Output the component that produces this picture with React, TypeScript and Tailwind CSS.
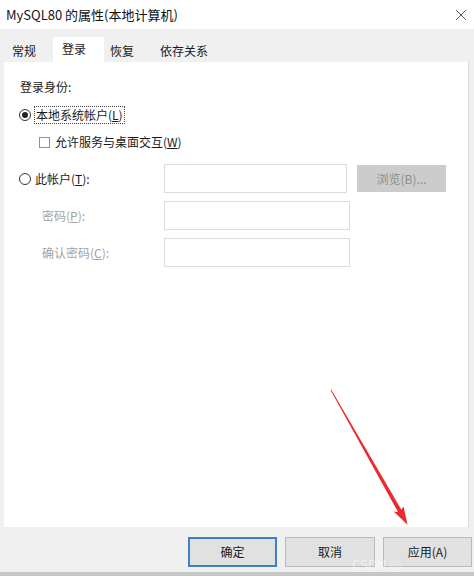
import React from "react";

const font = { fontFamily: '"Noto Sans CJK SC", "Noto Sans", sans-serif' };

function Radio({ checked }: { checked?: boolean }) {
  return (
    <span className="w-[12px] h-[12px] rounded-full border border-[#333] bg-white flex items-center justify-center shrink-0">
      {checked && <span className="w-[6px] h-[6px] rounded-full bg-[#222]" />}
    </span>
  );
}

function Field({ w }: { w: string }) {
  return <div className={`h-[29px] border border-[#dcdcdc] bg-white ${w}`} />;
}

export default function App() {
  return (
    <div style={font} className="w-[474px] h-[576px] bg-[#f0f0f0] flex flex-col text-[12px] text-[#1a1a1a] relative overflow-hidden">
      {/* 标题栏 */}
      <div className="h-[29px] bg-white flex items-center justify-between pl-[6px] pr-[7px]">
        <span className="text-[13px] text-[#111]">MySQL80 的属性(本地计算机)</span>
        <svg width="12" height="12" viewBox="0 0 12 12" className="text-[#555]">
          <path d="M1 1 L11 11 M11 1 L1 11" stroke="currentColor" strokeWidth="1" />
        </svg>
      </div>

      {/* 选项卡 */}
      <div className="flex items-end pl-[4px] pt-[8px] h-[33px]">
        <div className="w-[49px] h-[23px] flex items-center pl-[8px]">常规</div>
        <div className="w-[51px] h-[25px] bg-white flex items-center pl-[9px] pb-[2px]">登录</div>
        <div className="w-[48px] h-[23px] flex items-center pl-[6px]">恢复</div>
        <div className="w-[61px] h-[23px] flex items-center pl-[8px]">依存关系</div>
      </div>

      {/* 面板 */}
      <div className="ml-[4px] w-[465px] h-[465px] bg-white border-r border-[#dadada] relative">
        <div className="pl-[16px] pt-[16px]">登录身份:</div>

        <div className="flex items-center mt-[10px] pl-[15px] gap-[3px]">
          <Radio checked />
          <span className="border border-dotted border-[#444] px-[1px] leading-[16px]">
            本地系统帐户(<span className="underline">L</span>)
          </span>
        </div>

        <div className="flex items-center mt-[9px] pl-[35px] gap-[5px]">
          <span className="w-[11px] h-[11px] border border-[#6d9bd1] bg-white shrink-0" />
          <span>
            允许服务与桌面交互(<span className="underline">W</span>)
          </span>
        </div>

        <div className="flex items-center mt-[13px]">
          <div className="w-[160px] flex items-center pl-[15px] gap-[4px]">
            <Radio />
            <span>
              此帐户(<span className="underline">T</span>):
            </span>
          </div>
          <Field w="w-[183px]" />
          <div className="ml-[10px] w-[89px] h-[27px] bg-[#cccccc] text-[#8c8c8c] flex items-center justify-center">
            浏览(B)...
          </div>
        </div>

        <div className="flex items-center mt-[8px]">
          <div className="w-[160px] pl-[38px] text-[#a3a3a3]">
            密码(<span className="underline">P</span>):
          </div>
          <Field w="w-[186px]" />
        </div>

        <div className="flex items-center mt-[8px]">
          <div className="w-[160px] pl-[38px] text-[#a3a3a3]">
            确认密码(<span className="underline">C</span>):
          </div>
          <Field w="w-[186px]" />
        </div>
      </div>

      {/* 底部按钮 */}
      <div className="flex-1 flex justify-end items-start pt-[10px] pr-[2px] gap-[8px] border-b-[4px] border-[#c6c6c6]">
        <button className="w-[89px] h-[30px] bg-[#e1e1e1] border-2 border-[#3c7fd1] flex items-center justify-center">确定</button>
        <button className="w-[90px] h-[30px] bg-[#e1e1e1] border border-[#b9b9b9] flex items-center justify-center">取消</button>
        <button className="w-[89px] h-[30px] bg-[#e1e1e1] border border-[#b9b9b9] flex items-center justify-center">应用(A)</button>
      </div>

      {/* 水印 */}
      <div className="absolute left-[352px] top-[558px] text-[13px] leading-[14px] text-white/50 pointer-events-none">CSDN @</div>

      {/* 红色箭头 */}
      <svg className="absolute left-0 top-0 pointer-events-none" width="474" height="576">
        <g transform="translate(331 390) rotate(60.4)">
          <polygon points="0,-0.4 139,-2 137,-5.5 155,0 137,5.5 139,2 0,0.4" fill="#ea2a2c" />
        </g>
      </svg>
    </div>
  );
}
